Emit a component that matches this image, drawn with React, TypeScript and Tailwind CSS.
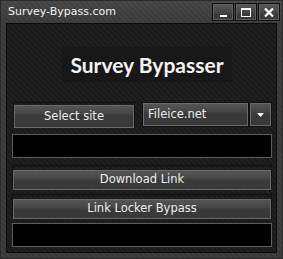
import { useState } from 'react';

const font = { fontFamily: '"DejaVu Sans", Verdana, sans-serif' };

// Carbon-like diagonal stripes used on the window body and inner panel
const frameBg =
  'bg-[repeating-linear-gradient(45deg,#383838_0px,#383838_2px,#3f3f3f_2px,#3f3f3f_4px)]';
const panelBg =
  'bg-[repeating-linear-gradient(45deg,#1a1a1a_0px,#1a1a1a_2px,#202020_2px,#202020_4px)]';
const btnBg =
  'bg-[linear-gradient(to_bottom,#555_0px,#4b4b4b_5px,#444_8px,#3a3a3a_9px,#383838_100%)]';

function Btn({ label, className = '' }: { label: string; className?: string }) {
  return (
    <div className={`border border-[#111] ${className}`}>
      <button
        className={`w-full h-full border border-[#6a6a6a] ${btnBg} text-[11.5px] text-[#eeeeee] leading-none`}
        style={font}
      >
        {label}
      </button>
    </div>
  );
}

function WinButton({ children }: { children: React.ReactNode }) {
  return (
    <div className="shrink-0 border border-[#111] w-[22px] h-[18px]">
      <div className={`w-full h-full border border-[#5e5e5e] ${btnBg} flex items-center justify-center text-white`}>
        {children}
      </div>
    </div>
  );
}

export default function App() {
  const [site] = useState('Fileice.net');

  return (
    <div className={`w-[283px] h-[259px] ${frameBg} border border-[#2a2a2a] flex flex-col`} style={font}>
      {/* タイトルバー */}
      <div className="h-[22px] flex items-start bg-[linear-gradient(to_bottom,rgba(255,255,255,0.06),rgba(255,255,255,0))]">
        <span className="ml-[7px] mt-[4px] text-[11px] text-[#f2f2f2] leading-[13px]">Survey-Bypass.com</span>
        <div className="flex gap-[1px] mt-[2px] ml-auto mr-[2px] shrink-0">
          <WinButton>
            <div className="w-[7px] h-[2px] bg-white mt-[8px]" />
          </WinButton>
          <WinButton>
            <div className="w-[10px] h-[9px] border border-white border-t-2" />
          </WinButton>
          <WinButton>
            <svg width="10" height="9" viewBox="0 0 10 9">
              <path d="M1 0.5L9 8.5M9 0.5L1 8.5" stroke="white" strokeWidth="2.2" />
            </svg>
          </WinButton>
        </div>
      </div>

      {/* 本体パネル */}
      <div className={`mx-[5px] h-[230px] border border-[#0c0c0c] ${panelBg} pl-[5px] pr-[4px] flex flex-col`}>
        <div className="flex justify-center mt-[23px] pl-[10px]">
          <div className="bg-[#181818] px-[8px] h-[35px] flex items-center">
            <h1
              className="text-[21px] font-bold text-[#f4f4f4] leading-none"
              style={{ fontFamily: 'Lato, "Open Sans", sans-serif' }}
            >
              Survey Bypasser
            </h1>
          </div>
        </div>

        <div className="flex mt-[20px] h-[25px]">
          <Btn label="Select site" className="w-[122px] ml-[1px]" />
          <div className="flex ml-[7px]">
            <div className="w-[107px] border border-[#111]">
              <div className={`w-full h-full border border-[#6a6a6a] ${btnBg} text-[11.5px] text-[#eeeeee] flex items-center pl-[4px]`}>
                {site}
              </div>
            </div>
            <div className="w-[23px] border border-[#111]">
              <div className={`w-full h-full border border-[#6a6a6a] ${btnBg} flex items-center justify-center`}>
                <svg width="7" height="4" viewBox="0 0 7 4">
                  <path d="M0 0H7L3.5 4Z" fill="white" />
                </svg>
              </div>
            </div>
          </div>
        </div>

        <div className="mt-[7px] h-[24px] bg-black border border-[#5e5e5e]" />
        <Btn label="Download Link" className="mt-[7px] h-[22px]" />
        <Btn label="Link Locker Bypass" className="mt-[7px] h-[22px]" />
        <div className="mt-[7px] h-[24px] bg-black border border-[#5e5e5e]" />
      </div>
    </div>
  );
}
